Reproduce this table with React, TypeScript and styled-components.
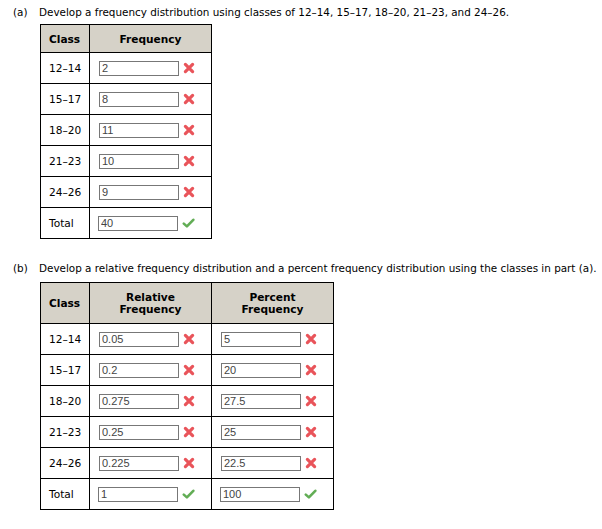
import styled, { createGlobalStyle } from "styled-components";

type Mark = "wrong" | "right";

type Row = {
  label: string;
  values: { value: string; mark: Mark }[];
};

const partA: Row[] = [
  { label: "12–14", values: [{ value: "2", mark: "wrong" }] },
  { label: "15–17", values: [{ value: "8", mark: "wrong" }] },
  { label: "18–20", values: [{ value: "11", mark: "wrong" }] },
  { label: "21–23", values: [{ value: "10", mark: "wrong" }] },
  { label: "24–26", values: [{ value: "9", mark: "wrong" }] },
  { label: "Total", values: [{ value: "40", mark: "right" }] },
];

const partB: Row[] = [
  { label: "12–14", values: [{ value: "0.05", mark: "wrong" }, { value: "5", mark: "wrong" }] },
  { label: "15–17", values: [{ value: "0.2", mark: "wrong" }, { value: "20", mark: "wrong" }] },
  { label: "18–20", values: [{ value: "0.275", mark: "wrong" }, { value: "27.5", mark: "wrong" }] },
  { label: "21–23", values: [{ value: "0.25", mark: "wrong" }, { value: "25", mark: "wrong" }] },
  { label: "24–26", values: [{ value: "0.225", mark: "wrong" }, { value: "22.5", mark: "wrong" }] },
  { label: "Total", values: [{ value: "1", mark: "right" }, { value: "100", mark: "right" }] },
];

const GlobalStyle = createGlobalStyle`
  body {
    margin: 0;
    background: #fff;
    font-family: "DejaVu Sans", Verdana, sans-serif;
    color: #000;
  }
`;

const Cross = () => (
  <svg width="12" height="12" viewBox="0 0 12 12">
    <path d="M2.4 2.4 L9.6 9.6 M9.6 2.4 L2.4 9.6" stroke="#e9545a" strokeWidth="3.2" strokeLinecap="round" />
  </svg>
);

const Check = () => (
  <svg width="13" height="12" viewBox="0 0 13 12">
    <path d="M1.8 6.6 L4.9 9.4 L11.3 2.8" stroke="#62ad55" strokeWidth="2.6" fill="none" strokeLinecap="round" strokeLinejoin="round" />
  </svg>
);

const AnswerTable = ({ headers, rows }: { headers: string[][]; rows: Row[] }) => (
  <Table>
    <thead>
      <tr>
        <HeadCell $width={49}>Class</HeadCell>
        {headers.map((lines, i) => (
          <HeadCell key={i} $width={122} $tall={lines.length > 1}>
            {lines.map((l, j) => (
              <div key={j}>{l}</div>
            ))}
          </HeadCell>
        ))}
      </tr>
    </thead>
    <tbody>
      {rows.map((row) => (
        <tr key={row.label}>
          <LabelCell>{row.label}</LabelCell>
          {row.values.map((v, i) => (
            <InputCell key={i} $total={row.label === "Total"}>
              <Field readOnly value={v.value} />
              <Icon>{v.mark === "wrong" ? <Cross /> : <Check />}</Icon>
            </InputCell>
          ))}
        </tr>
      ))}
    </tbody>
  </Table>
);

export default function App() {
  return (
    <Page>
      <GlobalStyle />
      <Section>
        <Part>(a)</Part>
        <Body $gap={5}>
          <Prompt>Develop a frequency distribution using classes of 12–14, 15–17, 18–20, 21–23, and 24–26.</Prompt>
          <AnswerTable headers={[["Frequency"]]} rows={partA} />
        </Body>
      </Section>
      <Section>
        <Part>(b)</Part>
        <Body $gap={7}>
          <Prompt>
            Develop a relative frequency distribution and a percent frequency distribution using the classes in part (a).
          </Prompt>
          <AnswerTable headers={[["Relative", "Frequency"], ["Percent", "Frequency"]]} rows={partB} />
        </Body>
      </Section>
    </Page>
  );
}

const Page = styled.div`
  display: flex;
  flex-direction: column;
  gap: 22px;
  padding: 5px 0 0 13px;
`;

const Section = styled.div`
  display: grid;
  grid-template-columns: 26px 1fr;
  font-size: 10.4px;
`;

const Part = styled.div`
  line-height: 14px;
`;

const Body = styled.div<{ $gap: number }>`
  display: flex;
  flex-direction: column;
  align-items: flex-start;
  gap: ${(p) => p.$gap}px;
`;

const Prompt = styled.div`
  line-height: 14px;
  white-space: nowrap;
`;

const Table = styled.table`
  border-collapse: collapse;
  margin-left: 1px;
  font-size: 10.6px;
`;

const HeadCell = styled.th<{ $width: number; $tall?: boolean }>`
  width: ${(p) => p.$width}px;
  height: ${(p) => (p.$tall ? 41 : 28)}px;
  box-sizing: border-box;
  padding: 0;
  background: #d6d2c8;
  border: 1px solid #000;
  font-weight: bold;
  line-height: 12px;
  text-align: center;
  vertical-align: middle;

  &:first-child {
    text-align: left;
    padding-left: 8px;
  }
`;

const LabelCell = styled.td`
  height: 30px;
  padding: 0 0 0 8px;
  border: 1px solid #000;
  vertical-align: middle;
  white-space: nowrap;
`;

const InputCell = styled.td<{ $total?: boolean }>`
  padding: 0 0 0 ${(p) => (p.$total ? 8 : 9)}px;
  border: 1px solid #000;
  vertical-align: middle;
  white-space: nowrap;
`;

const Field = styled.input`
  box-sizing: border-box;
  width: 80px;
  height: 15px;
  margin: 0;
  padding: 0 2px;
  border: 1px solid #777;
  font-family: "Liberation Sans", Arial, sans-serif;
  font-size: 11px;
  color: #444;
  vertical-align: middle;
  outline: none;
`;

const Icon = styled.span`
  display: inline-block;
  margin-left: 4px;
  vertical-align: middle;
  line-height: 0;
`;
